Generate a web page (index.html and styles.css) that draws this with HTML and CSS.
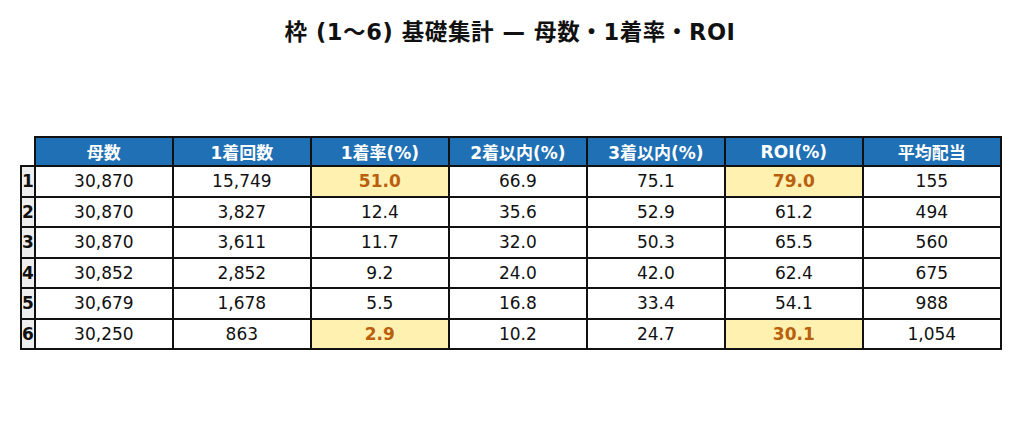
FILE: index.html
```html
<!DOCTYPE html>
<html lang="ja">
<head>
<meta charset="utf-8">
<link rel="stylesheet" href="styles.css">
</head>
<body>
<div class="page">
  <h1 class="title">枠 (1〜6) 基礎集計 — 母数・1着率・ROI</h1>
  <table class="grid">
    <thead>
      <tr>
        <th class="blank"></th>
        <th>母数</th><th>1着回数</th><th>1着率(%)</th><th>2着以内(%)</th><th>3着以内(%)</th><th>ROI(%)</th><th>平均配当</th>
      </tr>
    </thead>
    <tbody>
      <tr><td class="lab">1</td><td>30,870</td><td>15,749</td><td class="hl">51.0</td><td>66.9</td><td>75.1</td><td class="hl">79.0</td><td>155</td></tr>
      <tr><td class="lab">2</td><td>30,870</td><td>3,827</td><td>12.4</td><td>35.6</td><td>52.9</td><td>61.2</td><td>494</td></tr>
      <tr><td class="lab">3</td><td>30,870</td><td>3,611</td><td>11.7</td><td>32.0</td><td>50.3</td><td>65.5</td><td>560</td></tr>
      <tr><td class="lab">4</td><td>30,852</td><td>2,852</td><td>9.2</td><td>24.0</td><td>42.0</td><td>62.4</td><td>675</td></tr>
      <tr><td class="lab">5</td><td>30,679</td><td>1,678</td><td>5.5</td><td>16.8</td><td>33.4</td><td>54.1</td><td>988</td></tr>
      <tr><td class="lab">6</td><td>30,250</td><td>863</td><td class="hl">2.9</td><td>10.2</td><td>24.7</td><td class="hl">30.1</td><td>1,054</td></tr>
    </tbody>
  </table>
</div>
</body>
</html>
```

FILE: styles.css
```css
html, body {
  margin: 0;
  padding: 0;
  background: #ffffff;
}
.page {
  padding: 17px 0 0 20px;
  font-family: "DejaVu Sans", "Noto Sans CJK JP", sans-serif;
  color: #111;
}
.title {
  margin: 0 0 89px 0;
  padding-right: 20px;
  text-align: center;
  font-size: 22.5px;
  font-weight: bold;
  line-height: 30px;
  letter-spacing: 0.6px;
  color: #111;
}
.grid {
  border-collapse: collapse;
  table-layout: fixed;
}
.grid th, .grid td {
  border: 2px solid #111;
  padding: 0;
  text-align: center;
}
.grid th {
  background: #1f70b5;
  color: #fff;
  font-size: 17px;
  font-weight: bold;
  height: 27px;
  width: 136px;
}
.grid th.blank {
  background: transparent;
  border-top: none;
  border-left: none;
  width: 11px;
}
.grid td {
  font-size: 17px;
  height: 28.5px;
  background: #fff;
}
.grid td.lab {
  background: #eeeeee;
  font-weight: bold;
  font-size: 17px;
  text-align: left;
  padding-left: 0;
}
.grid td.hl {
  background: #fff1b0;
  color: #b9600f;
  font-weight: bold;
}
```
